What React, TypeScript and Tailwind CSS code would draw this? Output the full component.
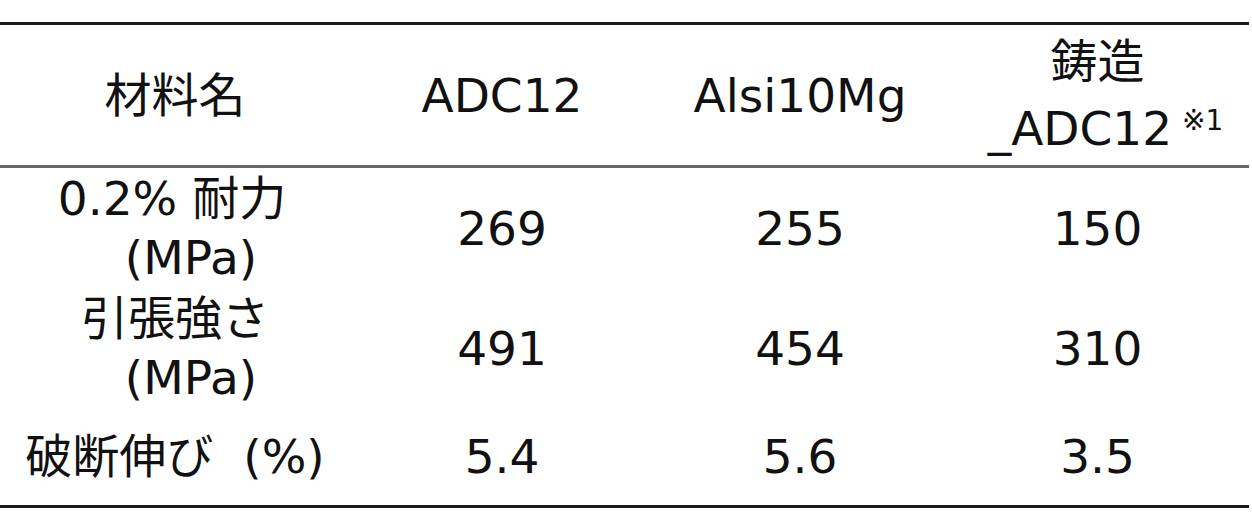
import React from "react";

const font = "font-['DejaVu_Sans','Noto_Sans_CJK_JP',sans-serif]";

export default function App() {
  return (
    <div className={`w-[1252px] h-[530px] bg-white pt-[22px] text-[#111] ${font}`}>
      <div className="w-[1249px] border-t-[3px] border-b-[3px] border-[#1a1a1a] text-[47px] leading-[59px]">
        {/* header */}
        <div className="grid grid-cols-[350px_304px_292px_303px] h-[143px] items-center text-center border-b-[3px] border-[#666]">
          <div>材料名</div>
          <div>ADC12</div>
          <div>Alsi10Mg</div>
          <div className="flex flex-col items-center">
            <div>鋳造</div>
            <div className="pl-[16px] whitespace-nowrap">
              _ADC12<span className="ml-[10px] text-[28px] align-[15px]">※1</span>
            </div>
          </div>
        </div>
        {/* row 2 */}
        <div className="grid grid-cols-[350px_304px_292px_303px] h-[120px] items-center text-center">
          <div className="flex flex-col items-center">
            <div className="pr-[6px] whitespace-nowrap">0.2% 耐力</div>
            <div className="pl-[32px]">(MPa)</div>
          </div>
          <div>269</div>
          <div>255</div>
          <div>150</div>
        </div>
        {/* row 3 */}
        <div className="grid grid-cols-[350px_304px_292px_303px] h-[120px] items-center text-center">
          <div className="flex flex-col items-center">
            <div>引張強さ</div>
            <div className="pl-[32px]">(MPa)</div>
          </div>
          <div>491</div>
          <div>454</div>
          <div>310</div>
        </div>
        {/* row 4 */}
        <div className="grid grid-cols-[350px_304px_292px_303px] h-[97px] items-center text-center">
          <div className="whitespace-nowrap">
            破断伸び<span className="ml-[30px]">(%)</span>
          </div>
          <div>5.4</div>
          <div>5.6</div>
          <div>3.5</div>
        </div>
      </div>
    </div>
  );
}
